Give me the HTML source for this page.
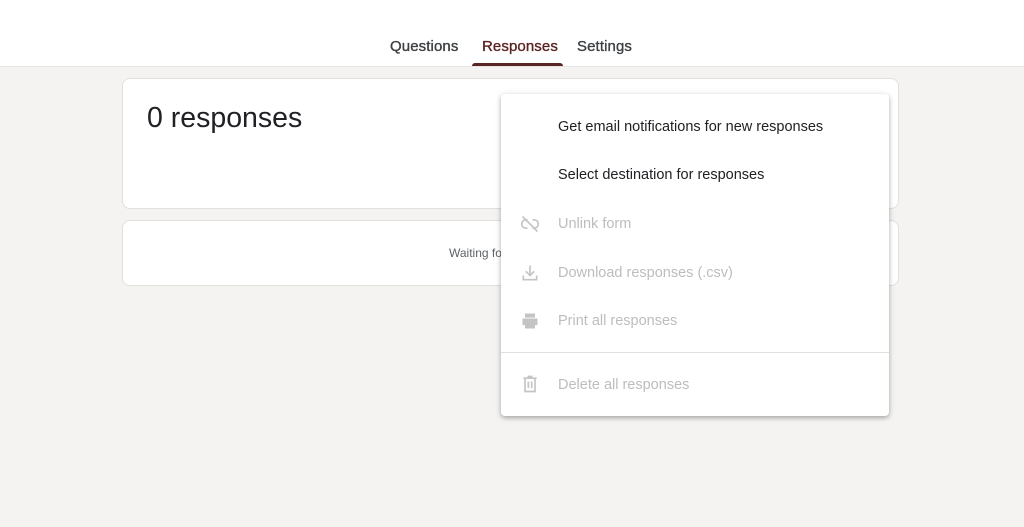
<!DOCTYPE html>
<html><head><style>
body{margin:0;width:1024px;height:527px;background:#f4f3f1;font-family:"Liberation Sans",sans-serif;position:relative;overflow:hidden}
.hdr{position:absolute;left:0;top:0;width:1024px;height:66px;background:#fff;border-bottom:1px solid #e6e4e1}
.tab{position:absolute;top:38px;font-size:15px;color:#3c4043;-webkit-text-stroke:0.35px #3c4043;letter-spacing:0.1px}
.card{position:absolute;left:122px;width:775px;background:#fff;border:1px solid #e2e0dd;border-radius:8px}
.menu{position:absolute;left:501px;top:94px;width:388px;height:322px;background:#fff;border-radius:4px;box-shadow:0 2px 4px rgba(0,0,0,.25),0 1px 8px rgba(0,0,0,.1)}
.it{position:absolute;left:57px;font-size:14.5px;color:#202124}
.dis{color:#bdbdbd}
.ic{position:absolute;left:19px}
</style></head><body>
<div class="hdr">
<div class="tab" style="left:390px">Questions</div>
<div class="tab" style="left:482px;color:#5b2424;-webkit-text-stroke:0.35px #5b2424">Responses</div>
<div class="tab" style="left:577px">Settings</div>
<div style="position:absolute;left:472px;top:63px;width:91px;height:3px;background:#5b2424;border-radius:3px 3px 0 0"></div>
</div>
<div class="card" style="top:78px;height:129px"><div style="position:absolute;left:24px;top:23px;font-size:28.5px;color:#202124">0 responses</div></div>
<div class="card" style="top:220px;height:64px"><div style="position:absolute;left:326px;top:25px;font-size:12px;color:#5f6368">Waiting for responses</div></div>
<div class="menu">
<div class="it" style="top:25px">Get email notifications for new responses</div>
<div class="it" style="top:73px">Select destination for responses</div>
<svg class="ic" style="top:120px" width="20" height="20" viewBox="0 0 24 24" fill="none" stroke="#c4c4c4" stroke-width="2"><path d="M9 7H7a5 5 0 0 0 0 10h2M15 7h2a5 5 0 0 1 0 10h-2M3 3l18 18"/></svg>
<div class="it dis" style="top:122px">Unlink form</div>
<svg class="ic" style="top:169px" width="20" height="20" viewBox="0 0 24 24" fill="none" stroke="#c4c4c4" stroke-width="2"><path d="M12 3v11M7 10l5 5 5-5M4 15v5h16v-5"/></svg>
<div class="it dis" style="top:171px">Download responses (.csv)</div>
<svg class="ic" style="top:217px" width="20" height="20" viewBox="0 0 24 24" fill="#c4c4c4"><path d="M6 3h12v5H6zM3 9h18v8h-3v4H6v-4H3z"/></svg>
<div class="it dis" style="top:219px">Print all responses</div>
<div style="position:absolute;left:0;top:258px;width:388px;height:1px;background:#e0e0e0"></div>
<svg class="ic" style="top:280px" width="20" height="20" viewBox="0 0 24 24" fill="none" stroke="#c4c4c4" stroke-width="2"><path d="M4 5h16M9 3h6M6 5v16h12V5M10 9v8M14 9v8"/></svg>
<div class="it dis" style="top:283px">Delete all responses</div>
</div>
</body></html>
